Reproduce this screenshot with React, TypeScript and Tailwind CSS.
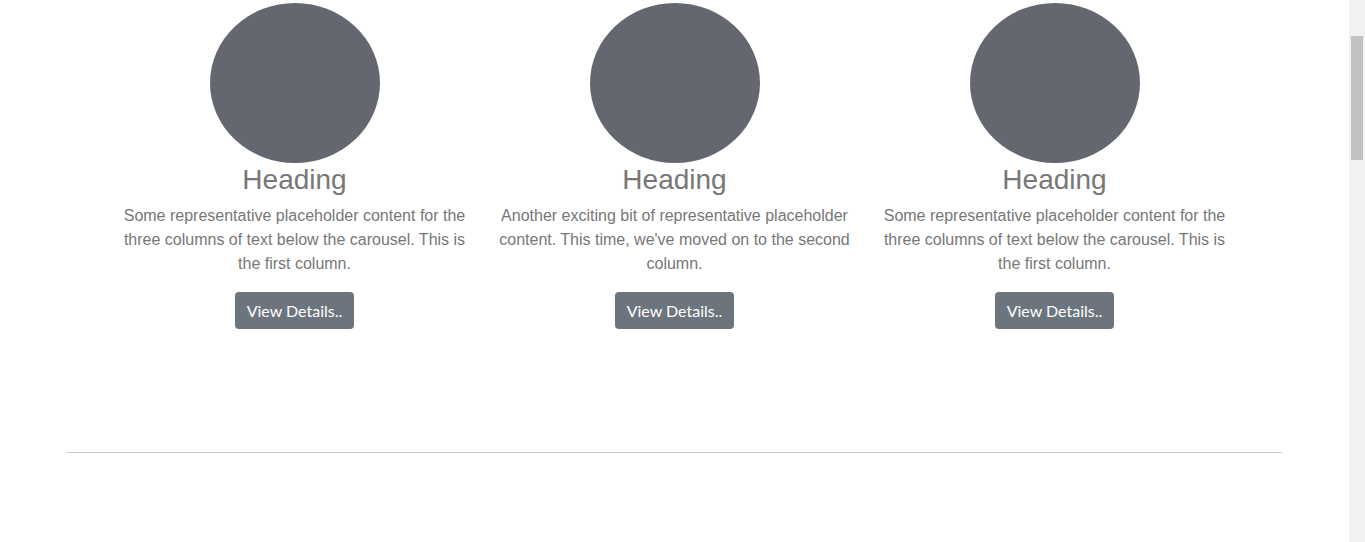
const columns = [
  "Some representative placeholder content for the three columns of text below the carousel. This is the first column.",
  "Another exciting bit of representative placeholder content. This time, we've moved on to the second column.",
  "Some representative placeholder content for the three columns of text below the carousel. This is the first column.",
];

function FeatureColumn({ text }: { text: string }) {
  return (
    <div className="flex flex-col items-center px-3 text-center">
      <div className="h-[160px] w-[170px] rounded-[50%] bg-[#646770]" />
      <h2 className="mb-[7px] text-[28px] leading-[1.2] font-normal text-[#777]">Heading</h2>
      <p className="mb-[16px] text-[16px] leading-[24px] text-[#777]">{text}</p>
      <button
        type="button"
        className="h-[37px] rounded-[4px] bg-[#6c757d] px-[12px] pt-[2px] font-['Lato',sans-serif] text-[16px] text-white"
      >
        View Details..
      </button>
    </div>
  );
}

export default function App() {
  return (
    <div className="flex h-[542px] w-full overflow-hidden bg-white font-['Liberation_Sans',Arial,sans-serif]">
      <main className="flex-1">
        <div className="mx-auto grid w-[1140px] grid-cols-3 pt-[3px]">
          {columns.map((text, i) => (
            <FeatureColumn key={i} text={text} />
          ))}
        </div>
        <hr className="mx-auto mt-[123px] w-[1215px] border-t border-[#cccccc]" />
      </main>

      {/* fake browser scrollbar */}
      <div className="flex w-[16px] flex-col bg-[#f1f1f1] px-[2px]">
        <div className="mt-[36px] h-[124px] bg-[#c1c1c1]" />
      </div>
    </div>
  );
}
